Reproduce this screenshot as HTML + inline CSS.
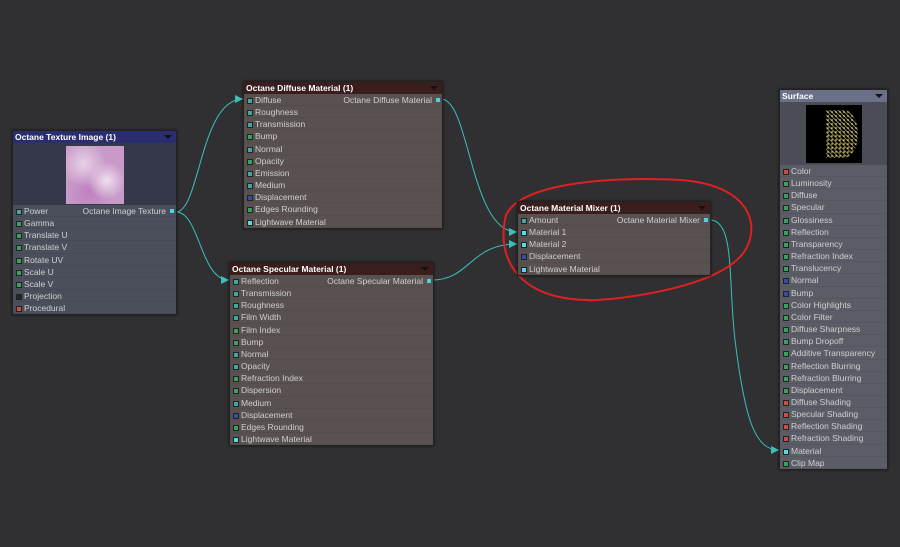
<!DOCTYPE html>
<html><head><meta charset="utf-8"><style>
body{margin:0;width:900px;height:547px;background:#303032;position:relative;overflow:hidden;font-family:"Liberation Sans",sans-serif;font-size:8.5px;color:#cfcfcf}
.n{position:absolute;border:1px solid #222;box-shadow:0 0 2px #111}
.h{height:12px;line-height:12px;font-weight:bold;color:#fff;padding-left:2px;font-size:8.5px;position:relative;white-space:nowrap}
.h:after{content:"";position:absolute;right:4px;top:4px;border:4px solid transparent;border-top:4px solid #111}
.r{height:12.17px;line-height:12.17px;padding-left:11px;position:relative;white-space:nowrap;border-bottom:1px solid rgba(0,0,0,0.06);box-sizing:border-box}
.r:before{content:"";position:absolute;left:3px;top:4px;width:4px;height:4px;background:var(--c,#3aa060);border:0.5px solid #222}
.o{position:absolute;right:10px}
.o:after{content:"";position:absolute;right:-8px;top:4px;width:4px;height:4px;background:#50d0e0}
.g{--c:#3aa060}.t{--c:#40a8a0}.c{--c:#58d8e8}.b{--c:#3050a8}.rd{--c:#c85040}.k{--c:#252528}
</style></head><body>
<svg width="900" height="547" style="position:absolute;left:0;top:0" fill="none">
<g stroke="#3cc0b8" stroke-width="1">
<path d="M176 212 C200 212,200 99,243 99"/>
<path d="M176 212 C200 212,200 280,229 280"/>
<path d="M441 99 C470 99,470 232,517 232"/>
<path d="M432 280 C470 280,470 244,517 244"/>
<path d="M710 220 C735 220,728 280,735 340 C745 420,755 450,779 450"/>
</g>
<g fill="#3cc0b8"><path d="M243 99 l-8 -4 v8z"/><path d="M229 280 l-8 -4 v8z"/><path d="M517 232 l-8 -4 v8z"/><path d="M517 244 l-8 -4 v8z"/><path d="M779 450 l-8 -4 v8z"/></g>
<path d="M590 300 C520 300,495 260,506 215 C520 185,600 176,680 180 C740 184,760 215,748 245 C735 275,680 290,620 298 C600 300,585 301,590 300Z" stroke="#e02020" stroke-width="2"/>
</svg>

<div class="n" style="left:12px;top:130px;width:163px;background:#4b4f5b">
<div class="h" style="background:#2a2e6e">Octane Texture Image (1)</div>
<div style="height:62px;background:#35374a;position:relative"><div style="position:absolute;left:53px;top:3px;width:58px;height:58px;background:radial-gradient(circle at 30% 30%,#e8d0e8,transparent 40%),radial-gradient(circle at 70% 60%,#f0e0f0,transparent 35%),radial-gradient(circle at 40% 80%,#c080c0,transparent 40%),#c89ac8"></div></div>
<div class="r t">Power<span class="o">Octane Image Texture</span></div>
<div class="r g">Gamma</div><div class="r g">Translate U</div><div class="r g">Translate V</div><div class="r g">Rotate UV</div><div class="r g">Scale U</div><div class="r g">Scale V</div><div class="r k">Projection</div><div class="r rd">Procedural</div>
</div>

<div class="n" style="left:243px;top:81px;width:198px;background:#58514f">
<div class="h" style="background:#3a1d1d">Octane Diffuse Material (1)</div>
<div class="r t">Diffuse<span class="o">Octane Diffuse Material</span></div>
<div class="r t">Roughness</div><div class="r t">Transmission</div><div class="r g">Bump</div><div class="r t">Normal</div><div class="r g">Opacity</div><div class="r t">Emission</div><div class="r t">Medium</div><div class="r b">Displacement</div><div class="r g">Edges Rounding</div><div class="r c">Lightwave Material</div>
</div>

<div class="n" style="left:229px;top:262px;width:203px;background:#58514f">
<div class="h" style="background:#3a1d1d">Octane Specular Material (1)</div>
<div class="r t">Reflection<span class="o">Octane Specular Material</span></div>
<div class="r t">Transmission</div><div class="r t">Roughness</div><div class="r t">Film Width</div><div class="r g">Film Index</div><div class="r g">Bump</div><div class="r t">Normal</div><div class="r t">Opacity</div><div class="r g">Refraction Index</div><div class="r g">Dispersion</div><div class="r t">Medium</div><div class="r b">Displacement</div><div class="r g">Edges Rounding</div><div class="r c">Lightwave Material</div>
</div>

<div class="n" style="left:517px;top:201px;width:192px;background:#58514f">
<div class="h" style="background:#3a1d1d">Octane Material Mixer (1)</div>
<div class="r t">Amount<span class="o">Octane Material Mixer</span></div>
<div class="r c">Material 1</div><div class="r c">Material 2</div><div class="r b">Displacement</div><div class="r c">Lightwave Material</div>
</div>

<div class="n" style="left:779px;top:89px;width:107px;background:#5a5d66">
<div class="h" style="background:#6a7088">Surface</div>
<div style="height:63px;background:#4a4d56;position:relative"><div style="position:absolute;left:26px;top:3px;width:56px;height:58px;background:#000"><div style="position:absolute;left:20px;top:5px;width:32px;height:48px;border-radius:0 45% 45% 0/0 50% 50% 0;background:radial-gradient(circle,#e0e0a0 0.6px,transparent 1px) 0 0/4px 4px,repeating-linear-gradient(45deg,#8a7a38 0 1px,#000 1px 3px)"></div></div></div>
<div class="r rd">Color</div><div class="r g">Luminosity</div><div class="r g">Diffuse</div><div class="r g">Specular</div><div class="r g">Glossiness</div><div class="r g">Reflection</div><div class="r g">Transparency</div><div class="r g">Refraction Index</div><div class="r g">Translucency</div><div class="r b">Normal</div><div class="r b">Bump</div><div class="r g">Color Highlights</div><div class="r g">Color Filter</div><div class="r g">Diffuse Sharpness</div><div class="r g">Bump Dropoff</div><div class="r g">Additive Transparency</div><div class="r g">Reflection Blurring</div><div class="r g">Refraction Blurring</div><div class="r g">Displacement</div><div class="r rd">Diffuse Shading</div><div class="r rd">Specular Shading</div><div class="r rd">Reflection Shading</div><div class="r rd">Refraction Shading</div><div class="r c">Material</div><div class="r g">Clip Map</div>
</div>
</body></html>
